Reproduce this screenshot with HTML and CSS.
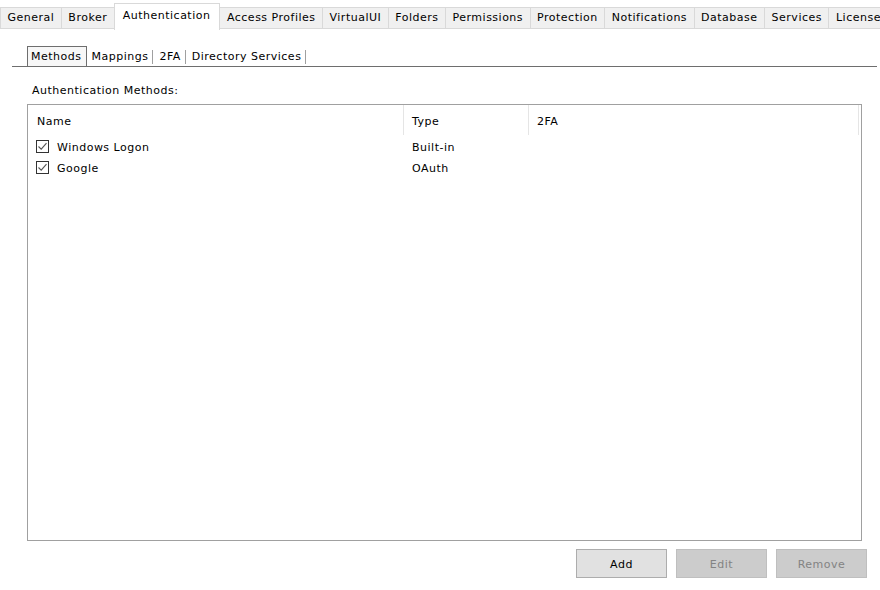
FILE: index.html
```html
<!DOCTYPE html>
<html lang="en">

<head>
    <meta charset="UTF-8">
    <title>Authentication</title>
    <link rel="stylesheet" href="styles.css">
</head>

<body>
    <div class="tabs">
        <div class="tab">General</div>
        <div class="tab">Broker</div>
        <div class="tab active">Authentication</div>
        <div class="tab">Access Profiles</div>
        <div class="tab">VirtualUI</div>
        <div class="tab">Folders</div>
        <div class="tab">Permissions</div>
        <div class="tab">Protection</div>
        <div class="tab">Notifications</div>
        <div class="tab">Database</div>
        <div class="tab">Services</div>
        <div class="tab">License</div>
    </div>

    <div class="page">
        <div class="subtabs">
            <div class="subtab current">Methods</div>
            <div class="subtab">Mappings</div>
            <span class="sep"></span>
            <div class="subtab">2FA</div>
            <span class="sep"></span>
            <div class="subtab">Directory Services</div>
            <span class="sep"></span>
        </div>

        <div class="caption">Authentication Methods:</div>

        <div class="listbox">
            <div class="row head">
                <div class="col name">Name</div>
                <div class="col type">Type</div>
                <div class="col tfa">2FA</div>
            </div>
            <div class="rows">
                <div class="row">
                    <div class="col name">
                        <svg class="check" width="13" height="13" viewBox="0 0 13 13">
                            <rect x="0.5" y="0.5" width="12" height="12" fill="#fff" stroke="#333" />
                            <path d="M2.5 6.5 L5.2 9.2 L10.5 3.2" fill="none" stroke="#555" stroke-width="1.1" />
                        </svg>
                        Windows Logon
                    </div>
                    <div class="col type">Built-in</div>
                    <div class="col tfa"></div>
                </div>
                <div class="row">
                    <div class="col name">
                        <svg class="check" width="13" height="13" viewBox="0 0 13 13">
                            <rect x="0.5" y="0.5" width="12" height="12" fill="#fff" stroke="#333" />
                            <path d="M2.5 6.5 L5.2 9.2 L10.5 3.2" fill="none" stroke="#555" stroke-width="1.1" />
                        </svg>
                        Google
                    </div>
                    <div class="col type">OAuth</div>
                    <div class="col tfa"></div>
                </div>
            </div>
        </div>

        <div class="buttons">
            <button class="btn">Add</button>
            <button class="btn" disabled>Edit</button>
            <button class="btn" disabled>Remove</button>
        </div>
    </div>
</body>

</html>
```

FILE: styles.css
```css
body {
    margin: 0;
    background-color: #ffffff;
    font-family: "DejaVu Sans", Verdana, sans-serif;
    font-size: 11px;
    letter-spacing: 0.5px;
    color: #000000;
    overflow: hidden;
}

/* main tab strip */
.tabs {
    display: flex;
    align-items: flex-start;
    height: 27px;
    margin-top: 3px;
    white-space: nowrap;
    overflow: hidden;
}

.tab {
    flex-shrink: 0;
    box-sizing: border-box;
    height: 22px;
    margin-top: 4px;
    margin-right: -1px;
    padding: 0 6.5px;
    line-height: 20px;
    background-color: #f0f0f0;
    border: 1px solid #d9d9d9;
}

.tab.active {
    position: relative;
    z-index: 1;
    height: 27px;
    margin-top: 0;
    padding: 2px 9px 0 8px;
    line-height: 20px;
    background-color: #ffffff;
    border-bottom: none;
}

/* sub tabs */
.subtabs {
    display: flex;
    align-items: flex-end;
    height: 20px;
    margin: 16px 3px 0 12px;
    border-bottom: 1px solid #6e6e6e;
}

.subtab {
    line-height: 18px;
    margin-left: 6px;
    margin-bottom: 0;
}

.subtab.current {
    box-sizing: border-box;
    height: 20px;
    margin: 0 0 0 15px;
    padding: 1px 4px 0 3px;
    line-height: 18px;
    background-color: #f7f7f7;
    border: 1px solid #6e6e6e;
    border-bottom: none;
}

.subtab.current + .subtab {
    margin-left: 5px;
}

.sep {
    width: 1px;
    height: 14px;
    margin: 0 0 2px 4px;
    background-color: #a0a0a0;
}

.caption {
    margin: 17px 0 0 32px;
    line-height: 14px;
}

/* list */
.listbox {
    box-sizing: border-box;
    width: 835px;
    height: 437px;
    margin: 6px 0 0 27px;
    border: 1px solid #a0a0a0;
}

.rows {
    padding-top: 2px;
}

.row {
    display: flex;
    height: 21px;
    align-items: center;
}

.row.head {
    height: 30px;
    align-items: stretch;
}

.col {
    box-sizing: border-box;
    display: flex;
    align-items: center;
    padding-left: 8px;
}

.col.name {
    width: 376px;
}

.col.type {
    width: 125px;
}

.col.tfa {
    width: 330px;
}

.row.head .col {
    padding-top: 2px;
    border-right: 1px solid #e5e5e5;
}

.row.head .col.name {
    padding-left: 9px;
}

.check {
    flex-shrink: 0;
    margin-right: 8px;
    margin-bottom: 3px;
}

/* buttons */
.buttons {
    display: flex;
    justify-content: flex-end;
    gap: 9px;
    margin: 8px 13px 0 0;
}

.btn {
    width: 91px;
    height: 29px;
    padding: 1px 0 0;
    font-family: inherit;
    font-size: 11px;
    letter-spacing: 0.5px;
    color: #000000;
    background-color: #e1e1e1;
    border: 1px solid #adadad;
    border-radius: 0;
}

.btn:disabled {
    color: #838383;
    background-color: #cccccc;
    border-color: #bfbfbf;
}
```
